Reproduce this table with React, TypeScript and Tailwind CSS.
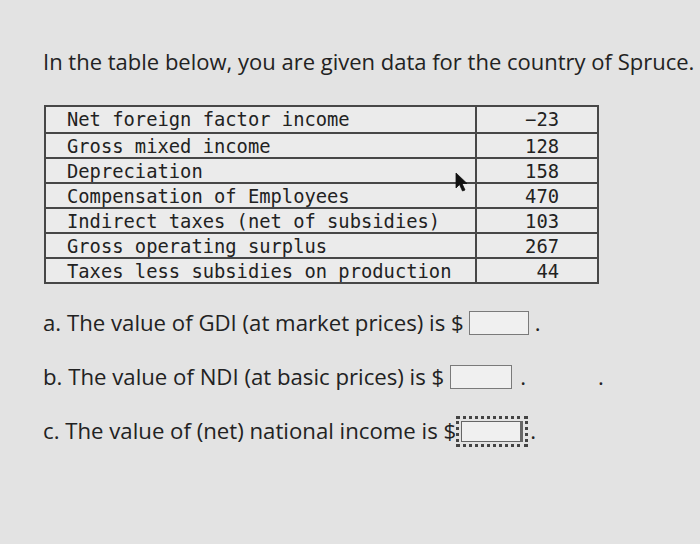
import React from "react";

const rows: [string, string][] = [
  ["Net foreign factor income", "\u221223"],
  ["Gross mixed income", "128"],
  ["Depreciation", "158"],
  ["Compensation of Employees", "470"],
  ["Indirect taxes (net of subsidies)", "103"],
  ["Gross operating surplus", "267"],
  ["Taxes less subsidies on production", "44"],
];

const sans = { fontFamily: '"Open Sans", "Liberation Sans", sans-serif' };
const mono = { fontFamily: '"DejaVu Sans Mono", "Liberation Mono", monospace' };

export default function App() {
  return (
    <div
      className="relative w-[700px] h-[544px] overflow-hidden bg-[#e3e3e3] text-[#222] pl-[43px] pt-[44px]"
      style={sans}
    >
      <h1 className="text-[22px] leading-[34px] whitespace-nowrap">
        In the table below, you are given data for the country of Spruce.
      </h1>

      <div className="mt-[27px] ml-[1px] w-[555px] border-2 border-[#474747] bg-[#ebebeb]" style={mono}>
        {rows.map(([label, value], i) => (
          <div key={i} className={"flex h-[25px] " + (i > 0 ? "border-t-2 border-[#474747]" : "")}>
            <div className="w-[431px] border-r-2 border-[#474747] pl-[21px] pt-[1px] text-[18.8px] leading-[23px] whitespace-nowrap">
              {label}
            </div>
            <div className="flex-1 text-right pr-[38px] pt-[1px] text-[18.8px] leading-[23px]">{value}</div>
          </div>
        ))}
      </div>

      <div className="mt-[12px] flex flex-col text-[22.2px] leading-[28px]">
        <div className="flex h-[54px] items-center whitespace-nowrap">
          <span>a. The value of GDI (at market prices) is $</span>
          <span className="ml-[5px] inline-block w-[60px] h-[24px] border-[1.5px] border-[#7a7a7a] bg-[#f0f0f0]" />
          <span className="ml-[6px]">.</span>
        </div>
        <div className="flex h-[54px] items-center whitespace-nowrap">
          <span>b. The value of NDI (at basic prices) is $</span>
          <span className="ml-[6px] inline-block w-[62px] h-[24px] border-[1.5px] border-[#7a7a7a] bg-[#f0f0f0]" />
          <span className="ml-[8px]">.</span>
          <span className="ml-[72px]">.</span>
        </div>
        <div className="flex h-[54px] items-center whitespace-nowrap">
          <span>c. The value of (net) national income is $</span>
          <span className="inline-flex p-[2px] border-[3px] border-dotted border-[#444]">
            <span className="inline-block w-[62px] h-[21px] border-[1.5px] border-[#666] border-r-[3px] bg-[#f0f0f0]" />
          </span>
          <span className="ml-[2px]">.</span>
        </div>
      </div>

      <svg className="absolute left-[455px] top-[172px]" width="14" height="20" viewBox="0 0 14 20">
        <path d="M1 1 L1 16 L4.5 12.5 L7.5 19 L10 18 L7 11.5 L12 11.5 Z" fill="#111" stroke="#111" strokeWidth="0.8" strokeLinejoin="round" />
      </svg>
    </div>
  );
}
